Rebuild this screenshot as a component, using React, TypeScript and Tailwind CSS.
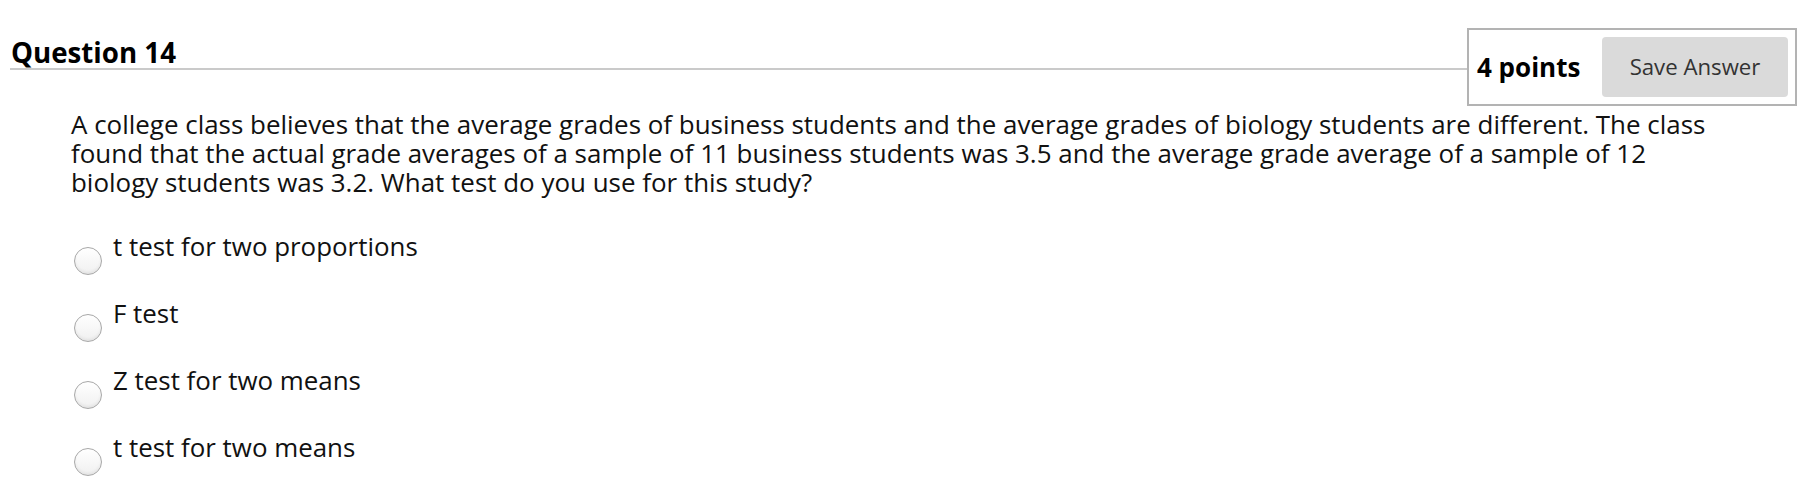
import React from "react";

const options = [
    "t test for two proportions",
    "F test",
    "Z test for two means",
    "t test for two means",
];

function Radio() {
    return (
        <span className="mt-[16px] block h-[28px] w-[28px] shrink-0 rounded-full border border-[#a8a8a8] bg-gradient-to-b from-white to-[#f0f0f0] shadow-[inset_0_-2px_3px_rgba(0,0,0,0.06)]" />
    );
}

export default function App() {
    return (
        <div className="min-h-[501px] bg-white pl-[10px] pr-[22px] text-[#111] [font-family:'Open_Sans',sans-serif]">
            {/* Header: title with rule, points box on the right */}
            <div className="flex items-start pt-[28px]">
                <div className="flex h-[42px] flex-1 items-end border-b-2 border-[#cacaca]">
                    <h3 className="pl-px text-[27.7px] font-bold leading-[32px] text-black">Question 14</h3>
                </div>
                <div className="flex h-[78px] w-[330px] items-center justify-between border-2 border-[#b3b3b3] px-[7px] py-[7px]">
                    <span className="pl-[1px] text-[26px] font-bold leading-none text-black">4 points</span>
                    <button className="flex h-[60px] w-[186px] items-center justify-center rounded-[4px] bg-[#dadada] text-[22.2px] text-[#333]">
                        Save Answer
                    </button>
                </div>
            </div>

            <div className="pl-[61px]">
                <p className="mt-[4px] max-w-[1660px] text-[25.95px] leading-[29px]">
                    A college class believes that the average grades of business students and the average grades of
                    biology students are different. The class found that the actual grade averages of a sample of 11
                    business students was 3.5 and the average grade average of a sample of 12 biology students was 3.2.
                    What test do you use for this study?
                </p>

                <div className="mt-[34px] flex flex-col gap-[23px] pl-[3px]">
                    {options.map((opt) => (
                        <label key={opt} className="flex items-start gap-[11px]">
                            <Radio />
                            <span className="text-[25.9px] leading-[30px]">{opt}</span>
                        </label>
                    ))}
                </div>
            </div>
        </div>
    );
}
